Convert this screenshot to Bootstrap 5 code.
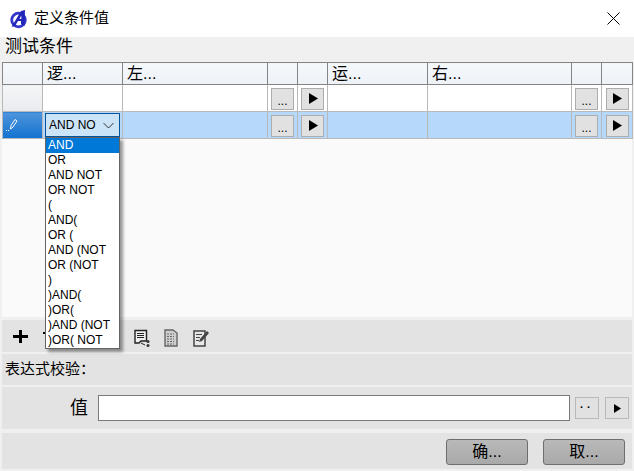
<!DOCTYPE html>
<html lang="zh">

<head>
  <meta charset="UTF-8">
  <title>定义条件值</title>
  <link href="https://cdn.jsdelivr.net/npm/bootstrap@5.3.0/dist/css/bootstrap.min.css" rel="stylesheet" />
  <style>
    html,
    body {
      height: 471px;
      overflow: hidden;
    }

    body {
      font-family: "Liberation Sans", "Noto Sans CJK SC", sans-serif;
      background-color: #f0f0f0;
      color: #000;
      width: 634px;
    }

    .title-bar {
      height: 37px;
      background: #fff;
      padding-left: 10px;
      padding-right: 14px;
      font-size: 15px;
    }

    .title-bar svg.logo {
      margin-right: 6px;
    }

    .section-title {
      height: 25px;
      line-height: 20px;
      font-size: 17px;
      padding-left: 5px;
    }

    .grid-area {
      height: 255px;
      margin: 0 2px 0 2px;
      background: #fafafa;
      position: relative;
    }

    .grid-table {
      table-layout: fixed;
      width: 630px;
      margin: 0;
      border-collapse: collapse;
    }

    .grid-table th,
    .grid-table td {
      padding: 0;
      font-weight: 400;
      vertical-align: middle;
    }

    .grid-table th {
      height: 22px;
      border: 1px solid #858585;
      background: linear-gradient(#f5f8fb, #eef2f7);
      font-size: 16px;
      line-height: 20px;
      padding-left: 4px;
      white-space: nowrap;
    }

    .grid-table td {
      height: 27px;
      border: 1px solid #b9b9b9;
      background: #fff;
      text-align: center;
    }

    .grid-table td.row-head {
      background: linear-gradient(#f5f6f8, #e9ebee);
    }

    .grid-table tr.picked td {
      background: #b5d8fb;
    }

    .grid-table tr.picked td.row-head {
      background: linear-gradient(#4f95dc, #1272d0);
      text-align: left;
      padding-left: 3px;
      border-color: #b9b9b9;
    }

    .cell-btn {
      display: inline-flex;
      align-items: center;
      justify-content: center;
      width: 23px;
      height: 22px;
      padding: 0;
      background: #e1e1e1;
      border: 1px solid #adadad;
      border-radius: 0;
      font-size: 12px;
      line-height: 1;
      vertical-align: middle;
    }

    .cell-btn .dots {
      margin-top: 5px;
    }

    .combo-box {
      position: absolute;
      left: 43px;
      top: 51px;
      width: 75px;
      height: 24px;
      background: #cce4f7;
      border: 1px solid #005499;
      font-size: 12px;
      line-height: 22px;
      padding-left: 3px;
      overflow: hidden;
      white-space: nowrap;
    }

    .combo-box .combo-text {
      display: block;
      width: 47px;
      overflow: hidden;
    }

    .combo-box svg {
      position: absolute;
      right: 5px;
      top: 8px;
    }

    .combo-list {
      position: absolute;
      z-index: 5;
      left: 45px;
      top: 137px;
      width: 75px;
      height: 212px;
      background: #fff;
      border: 1px solid #646464;
      box-shadow: 3px 3px 3px rgba(0, 0, 0, 0.4);
      font-size: 12px;
    }

    .combo-list div {
      height: 15px;
      line-height: 15px;
      padding-left: 2px;
      white-space: nowrap;
    }

    .combo-list div.on {
      background: #0078d7;
      color: #fff;
    }

    .strip {
      background: #e3e3e3;
      margin: 0 2px;
    }

    .tool-strip {
      height: 32px;
      margin-top: 3px;
    }

    .tool-strip svg {
      flex: none;
    }

    .tool-strip svg.doc-icon {
      margin-top: 3px;
    }

    .check-strip {
      height: 31px;
      margin-top: 2px;
      font-size: 15px;
      line-height: 30px;
      padding-left: 3px;
    }

    .value-strip {
      height: 42px;
      margin-top: 2px;
    }

    .value-label {
      width: 86px;
      text-align: right;
      font-size: 18px;
      margin-right: 10px;
    }

    .value-input {
      width: 472px;
      height: 26px;
      border: 1px solid #7a7a7a;
      border-radius: 0;
      background: #fff;
      padding: 0;
    }

    .small-btn {
      width: 24px;
      height: 22px;
      background: #e1e1e1;
      border: 1px solid #b9b9b9;
      display: flex;
      align-items: center;
      justify-content: center;
      font-size: 11px;
      line-height: 1;
      padding: 0;
      border-radius: 0;
    }

    .small-btn .dots {
      margin-top: -8px;
      letter-spacing: 4px;
      font-weight: 700;
    }

    .action-strip {
      height: 36px;
      margin-top: 4px;
      padding-right: 7px;
      padding-top: 2px;
      gap: 15px;
    }

    .dlg-btn {
      width: 82px;
      height: 26px;
      padding: 0;
      background: linear-gradient(#b9b9b9, #a9a9a9);
      border: 1px solid #6e6e6e;
      border-radius: 3px;
      color: #000;
      font-size: 16px;
      line-height: 24px;
    }
  </style>
</head>

<body>
  <div class="title-bar d-flex align-items-center">
    <svg class="logo" width="18" height="20" viewBox="0 0 18 20">
      <circle cx="8.500" cy="11" r="6.800" fill="none" stroke="#3337cc" stroke-width="2.800" />
      <path d="M1.500 18 L11 2 L15 1 L14.500 17 L11 15 L11 12 L8 12 L5 17 Z" fill="#2226b8" />
      <path d="M9.500 10 L11.300 6.500 L11.300 10 Z" fill="#fff" />
    </svg>
    <span>定义条件值</span>
    <svg class="ms-auto" width="13" height="13" viewBox="0 0 13 13">
      <path d="M0.500 0.500 L12.500 12.500 M12.500 0.500 L0.500 12.500" stroke="#000" stroke-width="1" />
    </svg>
  </div>

  <div class="section-title">测试条件</div>

  <div class="grid-area">
    <table class="grid-table">
      <colgroup>
        <col style="width:40px">
        <col style="width:80px">
        <col style="width:145px">
        <col style="width:30px">
        <col style="width:30px">
        <col style="width:100px">
        <col style="width:144px">
        <col style="width:30px">
        <col style="width:31px">
      </colgroup>
      <thead>
        <tr>
          <th></th>
          <th>逻...</th>
          <th>左...</th>
          <th></th>
          <th></th>
          <th>运...</th>
          <th>右...</th>
          <th></th>
          <th></th>
        </tr>
      </thead>
      <tbody>
        <tr>
          <td class="row-head"></td>
          <td></td>
          <td></td>
          <td><button class="cell-btn"><span class="dots">...</span></button></td>
          <td><button class="cell-btn"><svg width="10" height="11"><path d="M1 0 L10 5.500 L1 11 Z" /></svg></button></td>
          <td></td>
          <td></td>
          <td><button class="cell-btn"><span class="dots">...</span></button></td>
          <td><button class="cell-btn"><svg width="10" height="11"><path d="M1 0 L10 5.500 L1 11 Z" /></svg></button></td>
        </tr>
        <tr class="picked">
          <td class="row-head">
            <svg width="14" height="14" viewBox="0 0 14 14" class="d-block">
              <path d="M4.500 11 L5 7.500 L9 1.500 L11 3 L7 9 Z" fill="#2f80d6" stroke="#fff" stroke-width="1" />
              <path d="M0 12.500 h1 M2 12.500 h1" stroke="#fff" />
            </svg>
          </td>
          <td></td>
          <td></td>
          <td><button class="cell-btn"><span class="dots">...</span></button></td>
          <td><button class="cell-btn"><svg width="10" height="11"><path d="M1 0 L10 5.500 L1 11 Z" /></svg></button></td>
          <td></td>
          <td></td>
          <td><button class="cell-btn"><span class="dots">...</span></button></td>
          <td><button class="cell-btn"><svg width="10" height="11"><path d="M1 0 L10 5.500 L1 11 Z" /></svg></button></td>
        </tr>
      </tbody>
    </table>
    <div class="combo-box">
      <span class="combo-text">AND NOT</span>
      <svg width="11" height="7" viewBox="0 0 11 7"><path d="M0.500 1 L5.500 6 L10.500 1" fill="none" stroke="#333" /></svg>
    </div>
  </div>

  <div class="combo-list">
    <div class="on">AND</div>
    <div>OR</div>
    <div>AND NOT</div>
    <div>OR NOT</div>
    <div>(</div>
    <div>AND(</div>
    <div>OR (</div>
    <div>AND (NOT</div>
    <div>OR (NOT</div>
    <div>)</div>
    <div>)AND(</div>
    <div>)OR(</div>
    <div>)AND (NOT</div>
    <div>)OR( NOT</div>
  </div>

  <div class="strip tool-strip d-flex align-items-center">
    <svg style="margin-left:11px" width="15" height="13" viewBox="0 0 15 13">
      <path d="M0 5 H15 V8 H0 Z M6 0 H9 V13 H6 Z" />
    </svg>
    <svg style="margin-left:15px" width="10" height="14" viewBox="0 0 10 14"><path d="M0 3 H10 V5 H0 Z" /></svg>
    <svg class="doc-icon" style="margin-left:79px" width="20" height="20" viewBox="0 0 20 20">
      <path d="M3 2.500 H14.500 V13 H9 L7 15 H3 Z" fill="#eee" stroke="#222" stroke-width="1.400" />
      <path d="M5 5.500 H12 M5 7.500 H12 M5 9.500 H12" stroke="#222" />
      <path d="M9 15 L13 17" stroke="#222" />
      <circle cx="16" cy="13.500" r="1.500" fill="#333" />
      <circle cx="16" cy="17.500" r="1.500" fill="#333" />
    </svg>
    <svg class="doc-icon" style="margin-left:10px" width="18" height="20" viewBox="0 0 18 20">
      <path d="M3 2 H11 L15 5 V18 H3 Z" fill="#cfcfcf" stroke="#666" stroke-width="1.400" />
      <path d="M5 6 H12 M5 8.500 H12 M5 11 H12 M5 13.500 H12 M5 16 H12" stroke="#666" stroke-dasharray="2 1" />
    </svg>
    <svg class="doc-icon" style="margin-left:11px" width="20" height="20" viewBox="0 0 20 20">
      <path d="M3 3 H14 V18 H3 Z" fill="#e8e8e8" stroke="#444" stroke-width="1.500" />
      <path d="M5 6.500 H11 M5 9.500 H9 M5 12.500 H8" stroke="#444" />
      <path d="M8 14 L9 11 L16 3 L18 5 L11 13 Z" fill="#444" />
    </svg>
  </div>

  <div class="strip check-strip">表达式校验：</div>

  <div class="strip value-strip d-flex align-items-center">
    <div class="value-label">值</div>
    <input class="value-input" type="text">
    <button class="small-btn" style="margin-left:5px"><span class="dots">..</span></button>
    <button class="small-btn" style="margin-left:6px"><svg width="7" height="9"><path d="M0 0 L7 4.500 L0 9 Z" /></svg></button>
  </div>

  <div class="strip action-strip d-flex align-items-center justify-content-end">
    <button class="dlg-btn">确...</button>
    <button class="dlg-btn">取...</button>
  </div>

  <script src="https://cdn.jsdelivr.net/npm/bootstrap@5.3.0/dist/js/bootstrap.bundle.min.js"></script>
</body>

</html>
